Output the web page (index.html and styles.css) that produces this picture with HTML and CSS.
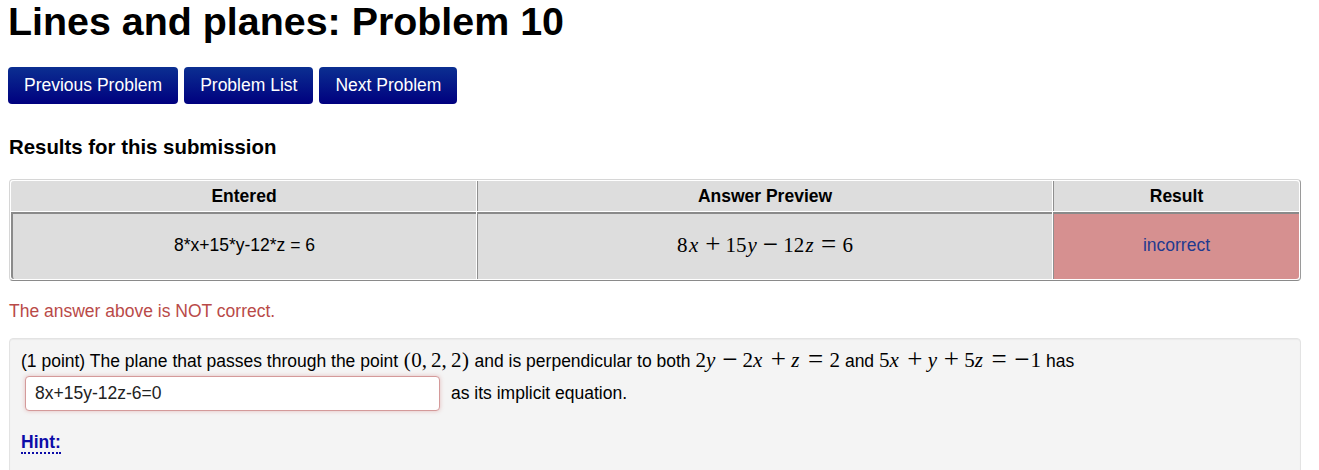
FILE: index.html
```html
<!DOCTYPE html>
<html>
<head>
<meta charset="utf-8">
<title>Lines and planes: Problem 10</title>
<link rel="stylesheet" href="styles.css">
</head>
<body>
<h1 class="title">Lines and planes: Problem 10</h1>
<div class="nav">
  <a class="btn">Previous Problem</a>
  <a class="btn">Problem List</a>
  <a class="btn">Next Problem</a>
</div>
<h2 class="results-head">Results for this submission</h2>
<table class="results">
  <colgroup><col class="c1"><col class="c2"><col class="c3"></colgroup>
  <tr class="hrow"><th>Entered</th><th>Answer Preview</th><th>Result</th></tr>
  <tr class="brow">
    <td>8*x+15*y-12*z = 6</td>
    <td class="preview"><span class="m"><span class="n">8</span><i class="x">x</i><span class="op">+</span><span class="n">15</span><i class="y">y</i><span class="op">−</span><span class="n">12</span><i class="z">z</i><span class="rel">=</span><span class="n">6</span></span></td>
    <td class="bad">incorrect</td>
  </tr>
</table>
<p class="err">The answer above is NOT correct.</p>
<div class="problem">
  <div class="line1">(1 point) The plane that passes through the point <span class="m"><span class="p">(</span><span class="n">0</span><span class="c">,</span><span class="n">2</span><span class="c">,</span><span class="n">2</span><span class="p">)</span></span> and is perpendicular to both <span class="m"><span class="n">2</span><i class="y">y</i><span class="op">−</span><span class="n">2</span><i class="x">x</i><span class="op">+</span><i class="z">z</i><span class="rel">=</span><span class="n">2</span></span> and <span class="m"><span class="n">5</span><i class="x">x</i><span class="op">+</span><i class="y">y</i><span class="op">+</span><span class="n">5</span><i class="z">z</i><span class="rel">=</span><span class="neg">−</span><span class="n">1</span></span> has</div>
  <div class="line2"><input class="answer" type="text" value="8x+15y-12z-6=0"><span class="after">as its implicit equation.</span></div>
  <div class="hint"><a class="hint-link">Hint:</a></div>
</div>
</body>
</html>
```
FILE: styles.css
```css
html, body {
  margin: 0;
  padding: 0;
  background: #fff;
}
body {
  padding: 0 8px;
  font-family: "Liberation Sans", Arial, sans-serif;
  font-size: 17.5px;
  color: #000;
}
.title {
  margin: 0;
  font-size: 39.4px;
  line-height: 42px;
  font-weight: bold;
}
.nav {
  margin-top: 25px;
  display: flex;
  gap: 6px;
}
.btn {
  display: block;
  padding: 8px 16px;
  line-height: 21px;
  font-size: 17.5px;
  color: #fff;
  background: linear-gradient(#0b2f91, #00007f);
  border-radius: 4px;
  cursor: pointer;
}
.results-head {
  margin: 31px 0 0 1px;
  font-size: 20.4px;
  line-height: 24px;
  font-weight: bold;
}
.results {
  margin-top: 20px;
  margin-left: 1px;
  width: 1292px;
  border-collapse: separate;
  border-spacing: 1px;
  border: 1px solid;
  border-color: #d6d6d6 #9a9a9a #8a8a8a #d6d6d6;
  border-radius: 4px;
  background: #fff;
  table-layout: fixed;
}
.c1 { width: 465px; }
.c2 { width: 575px; }
.c3 { width: 246px; }
.results th, .results td {
  background: #dddddd;
  text-align: center;
  padding: 0;
  font-size: 17.5px;
  box-sizing: border-box;
}
.results th {
  height: 30px;
  font-weight: bold;
  border-left: 1px solid #8f8f8f;
}
.results th:first-child { border-left: 1px solid #dddddd; border-top-left-radius: 3px; }
.results th:last-child { border-top-right-radius: 3px; }
.results td {
  height: 67px;
  padding-bottom: 3px;
  border-top: 2px solid #8a8a8a;
  border-left: 1px solid #8f8f8f;
}
.results td:first-child { border-left: 2px solid #8a8a8a; border-bottom-left-radius: 3px; }
.results td.bad {
  background: #d69090;
  color: #1f3a8f;
  border-bottom-right-radius: 3px;
}
.m {
  font-family: "Liberation Serif", "Times New Roman", serif;
  font-size: 21px;
  white-space: nowrap;
}
.m i {
  font-style: italic;
  display: inline-block;
}
.m i.x { width: 12.5px; }
.m i.y { width: 11px; }
.m i.z { width: 10.4px; }
.m .n { font-style: normal; }
.m .p {
  display: inline-block;
  width: 8.2px;
  text-align: center;
}
.m .c {
  display: inline-block;
  width: 9.4px;
}
.m .op, .m .rel, .m .neg {
  display: inline-block;
  width: 16.3px;
  text-align: center;
  font-size: 27px;
  line-height: 21px;
  vertical-align: -1px;
}
.m .neg { width: 17.5px; }
.m .op { margin: 0 4.7px; }
.m .rel { margin: 0 5.8px; }
.err {
  margin: 20px 0 0 1px;
  line-height: 21px;
  color: #b94a48;
}
.problem {
  margin: 16px 0 0 1px;
  width: 1292px;
  min-height: 140px;
  box-sizing: border-box;
  background: #f4f4f4;
  border: 1px solid #e3e3e3;
  border-radius: 4px;
  padding: 8px 11px;
  box-shadow: inset 0 1px 1px rgba(0,0,0,0.04);
}
.line1 {
  line-height: 26px;
}
.line2 {
  display: flex;
  align-items: center;
  margin-top: 2px;
}
.answer {
  width: 415px;
  height: 35px;
  box-sizing: border-box;
  margin: 0 11px 0 4px;
  padding: 4px 9px;
  font-family: "Liberation Sans", Arial, sans-serif;
  font-size: 17.5px;
  color: #222;
  background: #fff;
  border: 1px solid #d49a9a;
  border-radius: 4px;
  box-shadow: 0 0 4px rgba(200, 90, 90, 0.35);
  outline: none;
}
.hint {
  margin-top: 21px;
  line-height: 21px;
}
.hint-link {
  font-weight: bold;
  color: #0c0ca8;
  text-decoration: none;
  border-bottom: 2px dotted #0c0ca8;
  cursor: pointer;
}
```
